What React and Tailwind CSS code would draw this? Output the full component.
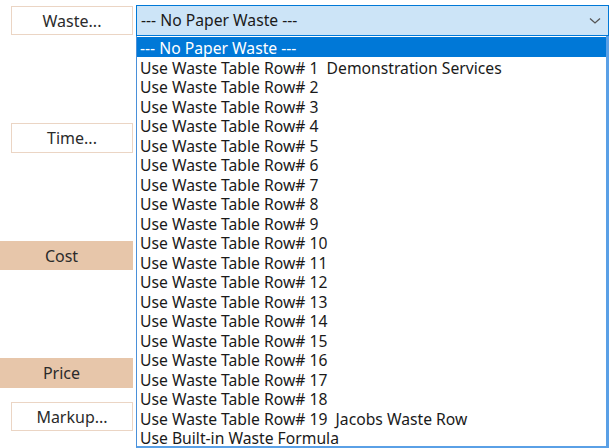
import React from "react";

const items = [
  "--- No Paper Waste ---",
  "Use Waste Table Row# 1  Demonstration Services",
  ...Array.from({ length: 17 }, (_, i) => `Use Waste Table Row# ${i + 2}`),
  "Use Waste Table Row# 19  Jacobs Waste Row",
  "Use Built-in Waste Formula",
];

function Btn({ label, className }) {
  return (
    <div
      className={
        "flex items-center justify-center text-[16px] text-[#2b2b2b] " + className
      }
    >
      {label}
    </div>
  );
}

export default function App() {
  return (
    <div
      className="w-[610px] h-[448px] bg-white flex overflow-hidden"
      style={{ fontFamily: '"Noto Sans", "Open Sans", sans-serif' }}
    >
      <div className="w-[133px] flex flex-col shrink-0">
        <Btn label="Waste..." className="mt-[6px] ml-[11px] w-[122px] h-[29px] border border-[#ebd5c4] bg-white" />
        <Btn label="Time..." className="mt-[88px] ml-[11px] w-[122px] h-[30px] border border-[#ebd5c4] bg-white" />
        <Btn label="Cost" className="mt-[88px] w-[133px] h-[29px] pr-[10px] bg-[#e7c6aa]" />
        <Btn label="Price" className="mt-[88px] w-[133px] h-[30px] pr-[10px] bg-[#e7c6aa]" />
        <Btn label="Markup..." className="mt-[14px] ml-[11px] w-[122px] h-[29px] border border-[#ebd5c4] bg-white" />
      </div>
      <div className="ml-[3px] w-[473px] flex flex-col">
        <div className="mt-[5px] h-[31px] border border-[#0078d7] bg-[#cce4f7] flex items-center pl-[4px] pr-[7px] text-[15.7px] text-[#1a1a1a]">
          <span className="flex-1 whitespace-pre">--- No Paper Waste ---</span>
          <svg width="12" height="8" viewBox="0 0 12 8" fill="none">
            <path d="M1 1.5 L6 6 L11 1.5" stroke="#555" strokeWidth="1.3" />
          </svg>
        </div>
        <div className="h-[412px] overflow-hidden border-l border-[#4a90d9] border-r-[3px] border-r-[#5aa0e6] border-b-2 border-b-[#5aa0e6] bg-white flex flex-col pt-[1px]">
          {items.map((t, i) => (
            <div
              key={i}
              className={
                "h-[19.5px] shrink-0 pl-[3px] " +
                (i === 0 ? "bg-[#0078d7] text-white" : "text-[#1a1a1a]")
              }
            >
              <div className="text-[15.7px] leading-[19.5px] whitespace-pre translate-y-[2px]">{t}</div>
            </div>
          ))}
        </div>
      </div>
    </div>
  );
}
